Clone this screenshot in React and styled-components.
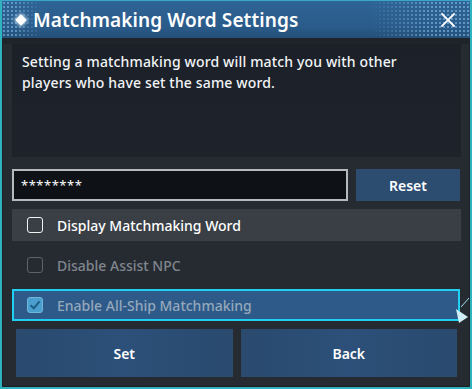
import React from 'react';
import styled, { createGlobalStyle } from 'styled-components';

const GlobalStyle = createGlobalStyle`
  body {
    margin: 0;
    background: #1a1e24;
    font-family: 'Noto Sans', 'Open Sans', sans-serif;
  }
  * { box-sizing: border-box; }
`;

const options = [
  { label: 'Display Matchmaking Word', variant: 'hover', checked: false },
  { label: 'Disable Assist NPC', variant: 'disabled', checked: false },
  { label: 'Enable All-Ship Matchmaking', variant: 'selected', checked: true },
];

export default function App() {
  return (
    <>
      <GlobalStyle />
      <Frame>
        <TitleBar>
          <Diamond />
          <Title>Matchmaking Word Settings</Title>
          <CloseButton aria-label="close">
            <svg width="16" height="16" viewBox="0 0 16 16">
              <path d="M2 2 L14 14 M14 2 L2 14" stroke="#fff" strokeWidth="1.8" strokeLinecap="square" />
            </svg>
          </CloseButton>
        </TitleBar>

        <Body>
          <Description>
            Setting a matchmaking word will match you with other players who have set the same word.
          </Description>

          <InputRow>
            <WordInput>********</WordInput>
            <ResetButton>Reset</ResetButton>
          </InputRow>

          <OptionList>
            {options.map((opt) => (
              <OptionRow key={opt.label} variant={opt.variant}>
                <CheckBox variant={opt.variant}>
                  {opt.checked && (
                    <svg width="14" height="14" viewBox="0 0 14 14">
                      <path d="M2.5 7.2 L5.8 10.2 L11.6 3.4" stroke="#1f5f86" strokeWidth="2" fill="none" />
                    </svg>
                  )}
                </CheckBox>
                <OptionLabel variant={opt.variant}>{opt.label}</OptionLabel>
                {opt.variant === 'selected' && (
                  <Pointer width="16" height="28" viewBox="0 0 16 28">
                    <path d="M5 10 L13 1" stroke="#9fdfee" strokeWidth="1" />
                    <polygon points="0,12 12,20 3,26" fill="#cfeef6" />
                  </Pointer>
                )}
              </OptionRow>
            ))}
          </OptionList>

          <ButtonRow>
            <BigButton>Set</BigButton>
            <BigButton>Back</BigButton>
          </ButtonRow>
        </Body>
      </Frame>
    </>
  );
}

const Frame = styled.div`
  width: 472px;
  height: 389px;
  display: flex;
  flex-direction: column;
  background: #262b32;
  border-left: 2px solid #2fb3bf;
  border-right: 2px solid #2fb3bf;
  border-bottom: 2px solid #2fb3bf;
  border-top: 1px solid #3aa6c8;
  box-shadow: inset 0 0 0 1px #1c2026;
`;

const TitleBar = styled.div`
  position: relative;
  height: 37px;
  display: flex;
  align-items: center;
  padding: 0 14px 0 13px;
  background: linear-gradient(180deg, #2f6496 0%, #2a5b8a 70%, #244f79 100%);
  border-bottom: 6px solid #1f242b;
  box-sizing: content-box;
  overflow: hidden;

  &::before,
  &::after {
    content: '';
    position: absolute;
    top: 0;
    bottom: 0;
    background-image: radial-gradient(circle, rgba(140, 200, 240, 0.55) 0.9px, transparent 1.3px);
    background-size: 4px 4px;
    pointer-events: none;
  }

  &::before {
    left: 0;
    width: 40px;
    -webkit-mask-image: linear-gradient(90deg, #000 30%, transparent);
    mask-image: linear-gradient(90deg, #000 30%, transparent);
  }

  &::after {
    right: 0;
    width: 100px;
    -webkit-mask-image: linear-gradient(270deg, #000 40%, transparent);
    mask-image: linear-gradient(270deg, #000 40%, transparent);
  }
`;

const Diamond = styled.span`
  width: 8px;
  height: 8px;
  margin: 0 8px 0 2px;
  background: #fff;
  transform: rotate(45deg);
  box-shadow: 0 0 4px 1px rgba(220, 240, 255, 0.8);
  z-index: 1;
`;

const Title = styled.h1`
  flex: 1;
  margin: 0;
  font-size: 19px;
  font-weight: 600;
  color: #fff;
  letter-spacing: 0.1px;
  z-index: 1;
`;

const CloseButton = styled.span`
  display: flex;
  z-index: 1;
`;

const Body = styled.div`
  flex: 1;
  display: flex;
  flex-direction: column;
  padding: 0 9px 8px 10px;
`;

const Description = styled.p`
  margin: 0;
  height: 113px;
  padding: 7px 40px 7px 10px;
  background: linear-gradient(180deg, #1b2029 0%, #1e232b 100%);
  color: #f2f4f6;
  font-size: 14px;
  line-height: 21px;
  font-weight: 500;
  letter-spacing: 0.15px;
`;

const InputRow = styled.div`
  display: flex;
  gap: 8px;
  margin-top: 12px;
  padding-right: 1px;
`;

const WordInput = styled.div`
  flex: 1;
  height: 32px;
  display: flex;
  align-items: center;
  padding: 0 7px;
  background: #0e1217;
  border: 2px solid #b6babd;
  color: #fff;
  font-size: 13px;
  letter-spacing: 0.5px;
`;

const ResetButton = styled.div`
  width: 104px;
  height: 32px;
  display: flex;
  align-items: center;
  justify-content: center;
  background: #2c4c70;
  color: #fff;
  font-size: 14px;
  font-weight: 600;
`;

const OptionList = styled.div`
  display: flex;
  flex-direction: column;
  gap: 8px;
  margin-top: 8px;
`;

const rowBg = { hover: '#3a3f46', disabled: 'transparent', selected: '#2d5a89' };

const OptionRow = styled.div`
  position: relative;
  height: 32px;
  display: flex;
  align-items: center;
  margin-right: ${({ variant }) => (variant === 'selected' ? '1px' : '0')};
  background: ${({ variant }) => rowBg[variant]};
  border: ${({ variant }) => (variant === 'selected' ? '2px solid #20d0f2' : 'none')};
  padding-left: ${({ variant }) => (variant === 'selected' ? '13px' : '15px')};
`;

const CheckBox = styled.span`
  width: 16px;
  height: 16px;
  display: flex;
  align-items: center;
  justify-content: center;
  border-radius: 3px;
  border: 1.5px solid
    ${({ variant }) => (variant === 'hover' ? '#f0f2f4' : variant === 'disabled' ? '#5d636b' : '#6fb7d8')};
  background: ${({ variant }) => (variant === 'selected' ? '#4a9fcf' : 'transparent')};
`;

const OptionLabel = styled.span`
  margin-left: 14px;
  font-size: 14px;
  font-weight: 500;
  color: ${({ variant }) => (variant === 'hover' ? '#ffffff' : variant === 'disabled' ? '#80868e' : '#95a8bb')};
`;

const Pointer = styled.svg`
  position: absolute;
  right: -14px;
  top: 6px;
`;

const ButtonRow = styled.div`
  display: flex;
  gap: 8px;
  margin-top: 8px;
  padding: 0 4px 0 4px;
`;

const BigButton = styled.div`
  flex: 1;
  height: 48px;
  display: flex;
  align-items: center;
  justify-content: center;
  background: linear-gradient(90deg, #2a4a6e 0%, #2c5079 50%, #2a4a6e 100%);
  color: #fff;
  font-size: 14px;
  font-weight: 600;
`;
